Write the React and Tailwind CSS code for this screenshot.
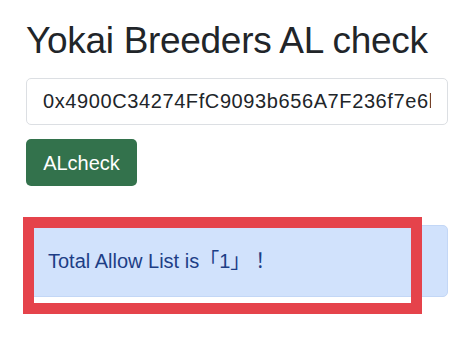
const App = () => {
    return (
        <div
            className="w-[474px] h-[352px] bg-white px-[26px] pt-[19px] overflow-hidden"
            style={{ fontFamily: '"Liberation Sans", "Noto Sans CJK JP", sans-serif' }}
        >
            {/* Title */}
            <h1 className="text-[37px] leading-[44px] font-normal text-[#212529] tracking-[-0.3px] whitespace-nowrap">
                Yokai Breeders AL check
            </h1>

            {/* Address input */}
            <input
                type="text"
                readOnly
                value="0x4900C34274FfC9093b656A7F236f7e6b2E1d8A9c"
                className="mt-[15px] block w-[422px] h-[47px] px-[16px] text-[20px] tracking-[0.6px] text-[#212529] bg-white border border-[#dcdfe3] rounded-[5px] outline-none"
            />

            {/* Check button */}
            <button className="mt-[14px] block w-[111px] h-[47px] rounded-[5px] bg-[#33724c] text-white text-[20px]">
                ALcheck
            </button>

            {/* Result alert */}
            <div className="relative mt-[39px] w-[422px] h-[72px] flex items-center px-[21px] bg-[#d1e2fc] border border-[#c3d7f6] rounded-[5px] text-[#1d3e86] text-[20px]">
                Total Allow List is「1」！
                {/* Red highlight frame */}
                <div className="absolute -left-[4px] -top-[9px] w-[399px] h-[97px] border-[11px] border-[#e5434b]" />
            </div>
        </div>
    );
};

export default App;
